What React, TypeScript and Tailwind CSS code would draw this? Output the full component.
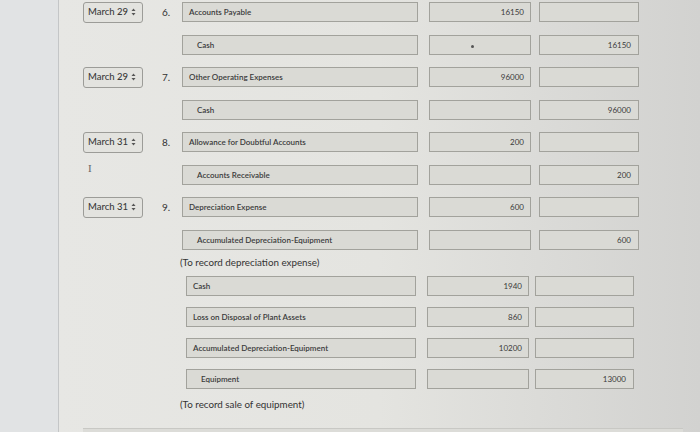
import React from "react";

type Line = { acct: string; debit?: string; credit?: string; indent?: boolean };
type Entry = { date?: string; no?: string; line: Line };

const firstGroup: Entry[] = [
  { date: "March 29", no: "6.", line: { acct: "Accounts Payable", debit: "16150" } },
  { line: { acct: "Cash", credit: "16150", indent: true } },
  { date: "March 29", no: "7.", line: { acct: "Other Operating Expenses", debit: "96000" } },
  { line: { acct: "Cash", credit: "96000", indent: true } },
  { date: "March 31", no: "8.", line: { acct: "Allowance for Doubtful Accounts", debit: "200" } },
  { line: { acct: "Accounts Receivable", credit: "200", indent: true } },
  { date: "March 31", no: "9.", line: { acct: "Depreciation Expense", debit: "600" } },
  { line: { acct: "Accumulated Depreciation-Equipment", credit: "600", indent: true } },
];

const secondGroup: Line[] = [
  { acct: "Cash", debit: "1940" },
  { acct: "Loss on Disposal of Plant Assets", debit: "860" },
  { acct: "Accumulated Depreciation-Equipment", debit: "10200" },
  { acct: "Equipment", credit: "13000", indent: true },
];

const SelectArrows = () => (
  <svg width="5" height="8" viewBox="0 0 5 8" className="shrink-0">
    <path d="M2.5 0.5 L4.5 3 L0.5 3 Z" fill="#555" />
    <path d="M2.5 7.5 L4.5 5 L0.5 5 Z" fill="#555" />
  </svg>
);

const DateSelect = ({ value }: { value: string }) => (
  <div className="w-[60px] h-[21px] flex items-center justify-between pl-[4px] pr-[6px] rounded-[3px] border border-[#9c9c98] bg-[#e3e3df] text-[9.5px] text-[#3a3a3a] font-medium">
    <span>{value}</span>
    <SelectArrows />
  </div>
);

const Box = ({
  children,
  className,
}: {
  children?: React.ReactNode;
  className: string;
}) => (
  <div
    className={
      "h-[20px] flex items-center border border-[#a2a29c] bg-[#dadad5] text-[8px] text-[#3b3b3b] " +
      className
    }
  >
    {children}
  </div>
);

// wide = top journal rows, otherwise the slightly narrower sale-of-equipment rows
const Row = ({ line, wide }: { line: Line; wide?: boolean }) => (
  <>
    <Box
      className={
        (wide ? "w-[236px] " : "w-[230px] ") +
        "text-[8.6px] font-semibold " +
        (line.indent ? "pl-[14px]" : "pl-[6px]")
      }
    >
      {line.acct}
    </Box>
    <Box className="w-[102px] ml-[11px] justify-end pr-[6px]">{line.debit}</Box>
    <Box className={(wide ? "ml-[8px] w-[100px]" : "ml-[6px] w-[99px]") + " justify-end pr-[7px]"}>
      {line.credit}
    </Box>
  </>
);

export default function App() {
  return (
    <div
      className="w-[700px] h-[432px] overflow-hidden flex"
      style={{ fontFamily: "Lato, 'Open Sans', sans-serif" }}
    >
      <div className="w-[59px] shrink-0 bg-[#e1e3e4] border-r border-[#c4c6c7]" />
      <div className="flex-1 bg-gradient-to-r from-[#e7e7e4] via-[#e4e4e0] to-[#d2d2d0] pl-[24px] pt-[2px] relative">
        <div className="flex flex-col gap-[12.5px]">
          {firstGroup.map((e, i) => (
            <div key={i} className="flex items-center h-[20px]">
              <div className="w-[60px] shrink-0">
                {e.date ? (
                  <DateSelect value={e.date} />
                ) : i === 5 ? (
                  <span
                    className="block pl-[5px] -mt-[12px] text-[11px] text-[#666]"
                    style={{ fontFamily: "'Liberation Serif', serif" }}
                  >
                    I
                  </span>
                ) : null}
              </div>
              <div className="w-[39px] shrink-0 pl-[19px] text-[10px] text-[#333]">{e.no}</div>
              <Row line={e.line} wide />
            </div>
          ))}
        </div>
        <p className="ml-[97px] mt-[5px] text-[9.8px] text-[#333]">(To record depreciation expense)</p>
        <div className="flex flex-col gap-[11px] mt-[7px]">
          {secondGroup.map((l, i) => (
            <div key={i} className="flex items-center h-[20px] pl-[103px]">
              <Row line={l} />
            </div>
          ))}
        </div>
        <p className="ml-[97px] mt-[8px] text-[9.8px] text-[#333]">(To record sale of equipment)</p>
        <div className="mt-[16px] w-[600px] h-[10px] border-t border-[#c8c8c4] bg-[#dcdcd8]" />
        <span className="absolute left-[412px] top-[45px] w-[3px] h-[3px] rounded-full bg-[#555]" />
      </div>
    </div>
  );
}
